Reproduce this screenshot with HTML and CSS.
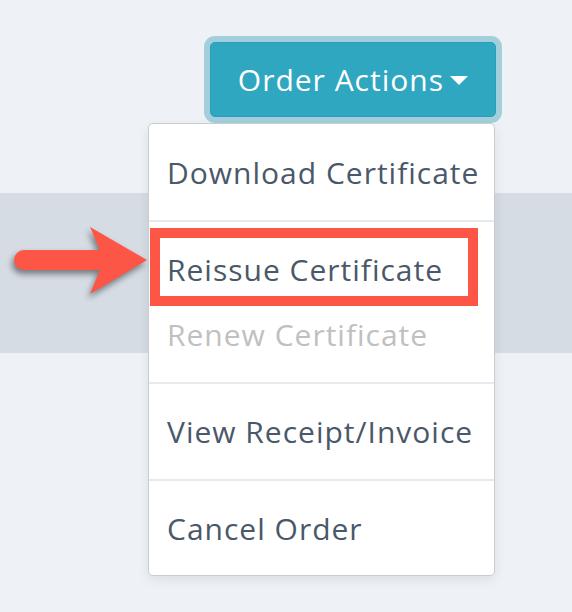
FILE: index.html
```html
<!DOCTYPE html>
<html lang="en">
<head>
    <meta charset="UTF-8">
    <meta name="viewport" content="width=device-width, initial-scale=1.0">
    <title>Order Actions</title>
    <link rel="stylesheet" href="styles.css">
</head>
<body>
    <div class="toolbar">
        <div class="dropdown">
            <button class="btn-actions">Order Actions<span class="caret"></span></button>

            <!-- Dropdown menu, shown open -->
            <div class="dropdown-menu">
                <a class="dropdown-item">Download Certificate</a>
                <div class="dropdown-divider"></div>
                <a class="dropdown-item">Reissue Certificate</a>
                <a class="dropdown-item disabled">Renew Certificate</a>
                <div class="dropdown-divider"></div>
                <a class="dropdown-item">View Receipt/Invoice</a>
                <div class="dropdown-divider"></div>
                <a class="dropdown-item">Cancel Order</a>
            </div>
        </div>
    </div>

    <div class="band"></div>

    <!-- Annotation: arrow + highlight box -->
    <svg class="note-arrow" width="160" height="100" viewBox="0 0 160 100">
        <path d="M24 40 H100 L90 17 L147 50 L90 84 L100 60 H24 A10 10 0 0 1 24 40 Z" fill="#fd5646"/>
    </svg>
    <div class="note-box"></div>
</body>
</html>
```

FILE: styles.css
```css
body {
    font-family: 'Open Sans', 'Noto Sans', sans-serif;
    background-color: #eef1f5;
    margin: 0;
    padding: 0;
    position: relative;
    min-height: 612px;
}
.toolbar {
    display: flex;
    justify-content: flex-end;
    padding: 42px 76px 0 0;
}
.dropdown {
    position: relative;
}
.btn-actions {
    display: flex;
    align-items: center;
    font-family: inherit;
    font-size: 30px;
    line-height: 45px;
    letter-spacing: 1px;
    color: white;
    background-color: #2fa7c0;
    border: 1px solid #2b9db5;
    border-radius: 5px;
    padding: 14px 27px;
    box-shadow: 0 0 0 6px #a2cfdb;
    cursor: pointer;
}
.caret {
    display: inline-block;
    margin-left: 6px;
    margin-top: 1px;
    border-top: 9px solid white;
    border-left: 9px solid transparent;
    border-right: 9px solid transparent;
}
/* Menu */
.dropdown-menu {
    position: absolute;
    top: calc(100% + 6px);
    right: 1px;
    width: 347px;
    box-sizing: border-box;
    background-color: white;
    border: 1px solid #c9cdd2;
    border-radius: 5px;
    padding: 16px 0 14px;
    box-shadow: 0 4px 12px rgba(0, 0, 0, 0.08);
    z-index: 2;
}
.dropdown-item {
    display: block;
    font-size: 30px;
    line-height: 45px;
    letter-spacing: 1px;
    padding: 10px 18px;
    color: #4a5869;
    white-space: nowrap;
}
.dropdown-item.disabled {
    color: #c0c0c0;
}
.dropdown-divider {
    height: 2px;
    margin: 15px 0;
    background-color: #e6e9ed;
}
.band {
    margin-top: 76px;
    height: 160px;
    background-color: #d5dce4;
}
.note-arrow {
    position: absolute;
    left: 0;
    top: 210px;
    filter: drop-shadow(-2px 4px 3px rgba(0, 0, 0, 0.45));
    z-index: 3;
}
.note-box {
    position: absolute;
    left: 150px;
    top: 228px;
    width: 328px;
    height: 78px;
    box-sizing: border-box;
    border: 10px solid #fd5646;
    z-index: 3;
}
```
